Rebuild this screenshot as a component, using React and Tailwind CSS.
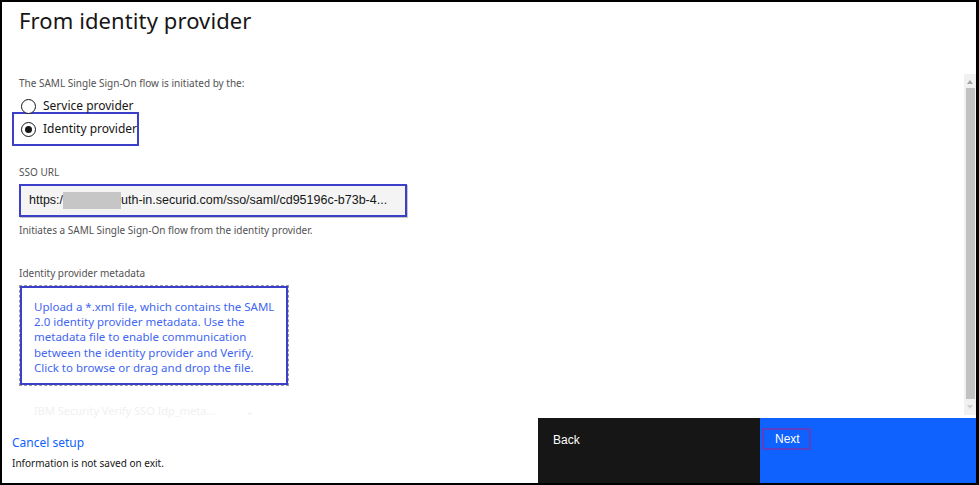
import React from 'react'

const font = { fontFamily: '"Noto Sans", "Open Sans", sans-serif' }
const arial = { fontFamily: '"Liberation Sans", Arial, sans-serif' }

const Radio = ({ checked, label }) => (
  <label className="flex items-center gap-[7px] h-[20px] text-[12px] text-[#161616] whitespace-nowrap">
    <span className="w-[15px] h-[15px] shrink-0 rounded-full border border-[#161616] flex items-center justify-center bg-white">
      {checked && <span className="w-[7px] h-[7px] rounded-full bg-[#161616]" />}
    </span>
    {label}
  </label>
)

export default function App() {
  return (
    <div
      className="w-[979px] h-[485px] bg-white border-l-2 border-t-2 border-r-[3px] border-b-2 border-black flex flex-col overflow-hidden"
      style={font}
    >
      {/* header */}
      <div className="h-[72px] shrink-0 pl-[17px] pt-[3px]">
        <h1 className="text-[22px] leading-[30px] tracking-[0.1px] text-[#161616] font-normal">From identity provider</h1>
      </div>

      {/* body + scrollbar */}
      <div className="flex flex-1 min-h-0">
        <div className="flex-1 pl-[17px] pt-[2px]">
          <p className="text-[10px] leading-[14px] text-[#525252]">The SAML Single Sign-On flow is initiated by the:</p>
          <div className="mt-[6px] pl-[2px]">
            <Radio label="Service provider" />
          </div>
          <div className="mt-[-4px] ml-[-7px] w-[127px] h-[34px] border-2 border-[#3b3fc9] flex items-center pl-[7px]">
            <Radio checked label="Identity provider" />
          </div>

          <p className="mt-[19px] text-[10px] leading-[14px] text-[#525252]">SSO URL</p>
          <div className="mt-[5px] w-[388px] h-[33px] border-2 border-[#3b3fc9] bg-[#f4f4f4] shadow-[1px_1px_0_#c6c6c6] flex items-center pl-[8px] text-[12.5px] text-[#161616] whitespace-nowrap" style={arial}>
            <span>https:/</span>
            <span className="w-[58px] h-[17px] bg-[#c6c6c6]" />
            <span>uth-in.securid.com/sso/saml/cd95196c-b73b-4...</span>
          </div>
          <p className="mt-[6px] text-[10px] leading-[14px] text-[#525252]">Initiates a SAML Single Sign-On flow from the identity provider.</p>

          <p className="mt-[29px] text-[10px] leading-[14px] text-[#525252]">Identity provider metadata</p>
          <div className="mt-[5px] w-[270px] h-[101px] border border-dashed border-[#9a9a9a]">
            <div className="h-full border-2 border-[#3b3fc9] pl-[12px] pt-[11px] text-[11.5px] leading-[15.2px] text-[#4266f0] whitespace-nowrap">
              Upload a *.xml file, which contains the SAML<br />
              2.0 identity provider metadata. Use the<br />
              metadata file to enable communication<br />
              between the identity provider and Verify.<br />
              Click to browse or drag and drop the file.
            </div>
          </div>
          <div className="mt-[18px] pl-[15px] flex items-center gap-[30px] text-[11px] leading-[14px] text-[#f0f0f0] whitespace-nowrap">
            <span>IBM Security Verify SSO Idp_meta...</span>
            <span>⌄</span>
          </div>
        </div>

        {/* scrollbar */}
        <div className="w-[12px] shrink-0 bg-[#f1f1f1] flex flex-col items-center mb-[3px]">
          <svg width="8" height="14" viewBox="0 0 8 14" className="shrink-0">
            <path d="M1 10 L4 6 L7 10 Z" fill="#a3a3a3" />
          </svg>
          <div className="w-[9px] flex-1 bg-[#c1c1c1]" />
          <svg width="8" height="16" viewBox="0 0 8 16" className="shrink-0">
            <path d="M1 6 L4 10 L7 6 Z" fill="#d0d0d0" />
          </svg>
        </div>
      </div>

      {/* footer */}
      <div className="h-[65px] shrink-0 flex">
        <div className="flex-1 pl-[10px] pt-[17px]">
          <a className="block text-[12px] leading-[16px] text-[#0f62fe]">Cancel setup</a>
          <p className="mt-[5px] text-[10px] leading-[14px] text-[#161616]">Information is not saved on exit.</p>
        </div>
        <button className="w-[222px] bg-[#161616] text-white text-[12px] text-left pl-[15px] pt-[13px] flex items-start" style={arial}>
          Back
        </button>
        <button className="w-[216px] bg-[#0f62fe] text-white text-[12px] text-left pl-[2px] pt-[10px] flex items-start" style={arial}>
          <span className="border-2 border-[#5b3fc4] h-[22px] w-[49px] flex items-center pl-[11px]">Next</span>
        </button>
      </div>
    </div>
  )
}
